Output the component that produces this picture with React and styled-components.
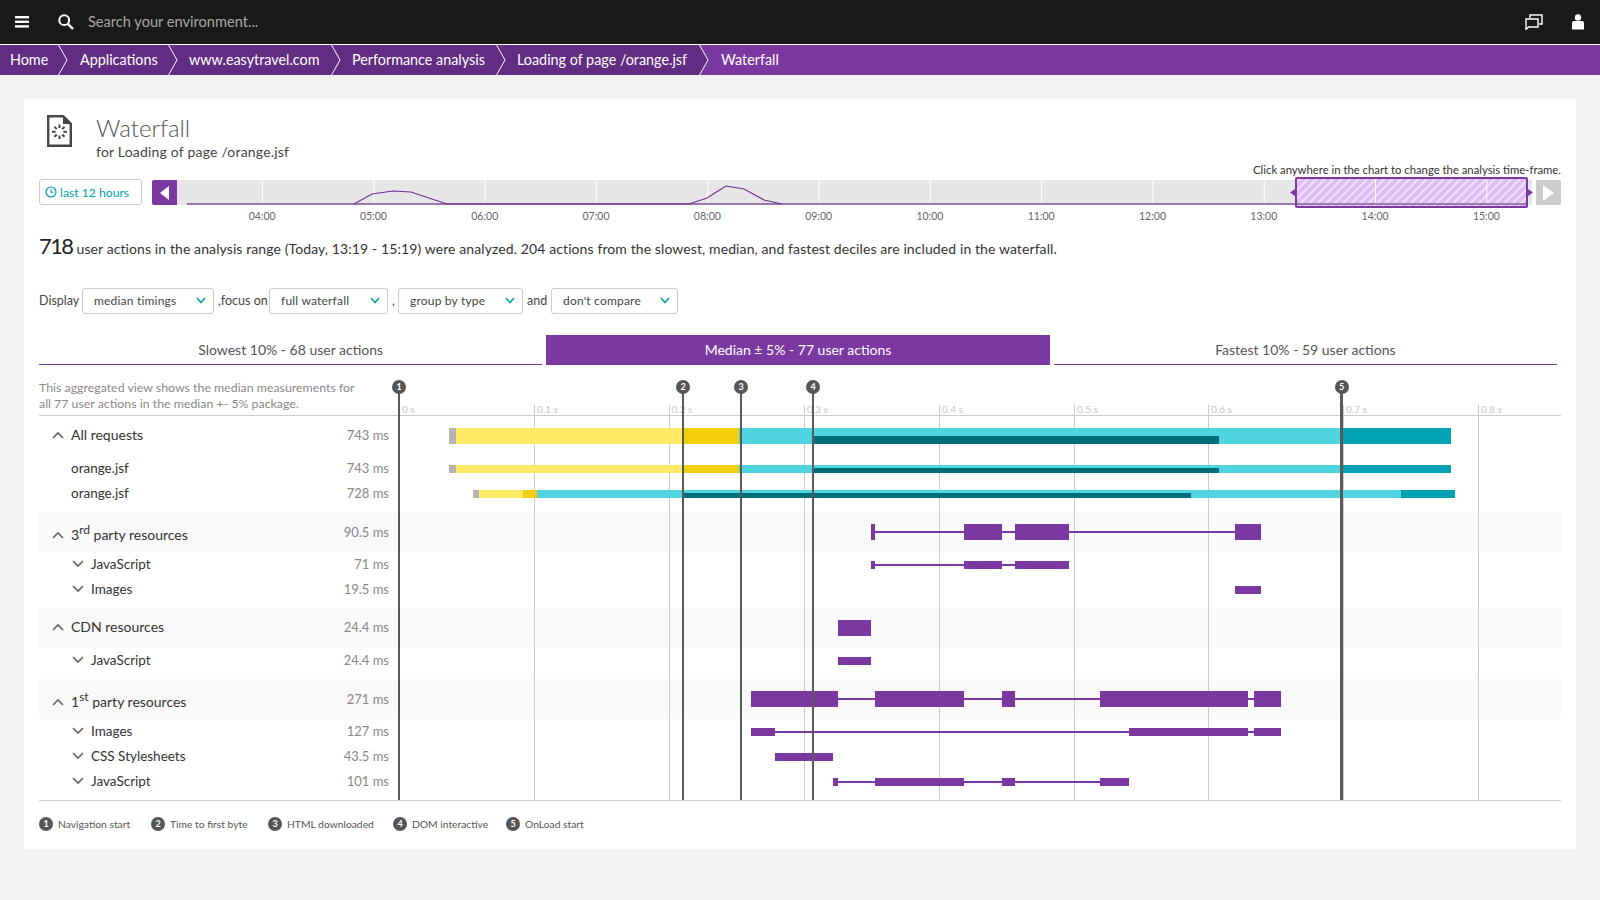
import React from 'react';
import styled, { createGlobalStyle } from 'styled-components';

const PURPLE = '#7c38a1';
const DARK_PURPLE = '#622c83';
const TEAL = '#00a1b2';
const FONT = '"Lato", "Open Sans", sans-serif';

const GlobalStyle = createGlobalStyle`
  html, body {
    margin: 0;
    padding: 0;
    background: #f2f2f2;
    font-family: ${FONT};
    color: #333;
  }
  * { box-sizing: border-box; }
`;

const Page = styled.div`
  width: 1600px;
  height: 900px;
  overflow: hidden;
  background: #f2f2f2;
`;

/* top bar */
const TopBar = styled.header`
  height: 45px;
  background: #191919;
  border-bottom: 1px solid #fff;
  display: flex;
  align-items: center;
  padding: 0 15px 0 15px;
`;

const SearchText = styled.span`
  color: #a8a8a8;
  font-size: 14.6px;
  margin: 0 0 2px 14px;
`;

const TopRight = styled.div`
  margin-left: auto;
  display: flex;
  align-items: center;
  gap: 28px;
`;

const IconSlot = styled.svg`
  display: block;
  flex: none;
  margin-left: ${p => p.$ml || 0}px;
`;

/* breadcrumbs */
const CrumbBar = styled.nav`
  height: 30px;
  background: ${PURPLE};
  display: flex;
  color: #fff;
  font-size: 14.35px;
`;

const Crumb = styled.div`
  display: flex;
  align-items: center;
  background: ${p => (p.$last ? 'transparent' : DARK_PURPLE)};
  padding-left: ${p => p.$pl}px;
`;

const CrumbText = styled.span`
  width: ${p => p.$w}px;
  white-space: nowrap;
  margin: 0 11px 2px 0;
`;

const CrumbChevron = ({ last }) => (
  <IconSlot width="11" height="30" viewBox="0 0 11 30" style={{ background: last ? PURPLE : DARK_PURPLE }}>
    <polygon points="0,0 9,15 0,30" fill={DARK_PURPLE} />
    <polyline points="0.5,0 9,15 0.5,30" fill="none" stroke="#fff" strokeWidth="1" />
  </IconSlot>
);

/* card */
const Card = styled.main`
  margin: 24px 24px 0;
  height: 750px;
  background: #fff;
  border-radius: 2px;
  padding: 0 15px;
`;

const TitleRow = styled.div`
  display: flex;
  height: 64px;
  padding: 16px 0 0 8px;
`;

const TitleText = styled.div`
  margin-left: 24px;
`;

const Title = styled.h1`
  margin: 0;
  font-size: 24px;
  font-weight: 300;
  line-height: 26px;
  color: #555;
`;

const Subtitle = styled.div`
  font-size: 14px;
  letter-spacing: 0.2px;
  line-height: 20px;
  margin-top: 1px;
  color: #454646;
`;

const Hint = styled.div`
  text-align: right;
  font-size: 11.3px;
  line-height: 14px;
  height: 16px;
  color: #333;
`;

const TimeRow = styled.div`
  display: flex;
  align-items: flex-start;
`;

const RangeButton = styled.div`
  width: 103px;
  height: 26px;
  border: 1px solid #ccc;
  border-radius: 3px;
  color: ${TEAL};
  font-size: 12.2px;
  display: flex;
  align-items: center;
  padding-left: 5px;
  gap: 3px;
  margin-right: 10px;
`;

const StepButton = styled.div`
  width: 25px;
  height: 25px;
  margin-top: 1px;
  background: ${p => (p.$active ? PURPLE : '#ccc')};
  border-radius: ${p => (p.$active ? '2px 0 0 2px' : '0 2px 2px 0')};
  margin-left: ${p => (p.$active ? 0 : 4)}px;
  display: flex;
  align-items: center;
  justify-content: center;
  color: #fff;
`;

const TimeChart = styled.div`
  width: 1355px;
  margin-top: 1px;
`;

const TimeSvg = styled.svg`
  display: block;
  overflow: visible;
  background: #e6e6e6;
`;

const TimeAxis = styled.div`
  display: flex;
  padding-left: 29.5px;
  margin-top: 4px;
`;

const TimeLabel = styled.span`
  flex: none;
  width: 111.3px;
  text-align: center;
  font-size: 10.5px;
  line-height: 14px;
  color: #666;
`;

const Summary = styled.div`
  margin-top: 7px;
  height: 31px;
  line-height: 31px;
  font-size: 14px;
  letter-spacing: 0.1px;
  color: #333;
  white-space: nowrap;
`;

const SummaryCount = styled.span`
  font-size: 22px;
  letter-spacing: -1.6px;
  margin-right: 4px;
  color: #222;
`;

const Filters = styled.div`
  margin-top: 27px;
  display: flex;
  align-items: center;
  gap: 4px;
  font-size: 12.5px;
  color: #454646;
`;

const FilterLabel = styled.span`
  width: ${p => p.$w}px;
  white-space: nowrap;
  padding-bottom: 1px;
`;

const Select = styled.div`
  width: ${p => p.$w}px;
  height: 26px;
  border: 1px solid #ccc;
  border-radius: 3px;
  padding: 0 7px 1px 11px;
  display: flex;
  align-items: center;
  justify-content: space-between;
  font-size: 12px;
  letter-spacing: 0.2px;
`;

const Tabs = styled.div`
  margin-top: 21px;
  padding-right: 4px;
  display: grid;
  grid-template-columns: repeat(3, 1fr);
  gap: 4px;
`;

const Tab = styled.div`
  height: 30px;
  line-height: 29px;
  text-align: center;
  font-size: 14px;
  color: ${p => (p.$active ? '#fff' : '#555')};
  background: ${p => (p.$active ? PURPLE : 'transparent')};
  border-bottom: 1px solid ${PURPLE};
`;

/* waterfall */
const Chart = styled.section`
  position: relative;
  isolation: isolate;
  border-bottom: 1px solid #ccc;
`;

const ChartHead = styled.div`
  height: 51px;
  padding-top: 15px;
  border-bottom: 1px solid #ccc;
`;

const InfoText = styled.p`
  margin: 0;
  width: 325px;
  font-size: 12.35px;
  line-height: 16px;
  color: #888;
`;

const GridLayer = styled.div`
  position: absolute;
  top: 40px;
  bottom: 0;
  left: 0;
  right: 0;
  z-index: 0;
  pointer-events: none;
`;

const GridLine = styled.div`
  position: absolute;
  top: 0;
  bottom: 0;
  width: 1px;
  background: #ccc;
`;

const GridTick = styled.span`
  position: absolute;
  left: 3px;
  top: -1px;
  font-size: 10px;
  line-height: 11px;
  color: #c8c8c8;
  white-space: nowrap;
`;

const MarkerLayer = styled.div`
  position: absolute;
  top: 15px;
  bottom: 0;
  left: 0;
  right: 0;
  z-index: 2;
  pointer-events: none;
`;

const MarkerLine = styled.div`
  position: absolute;
  top: 7px;
  bottom: 0;
  width: ${p => p.$w || 2}px;
  background: #5a5a5a;
`;

const Dot = styled.span`
  width: 14px;
  height: 14px;
  border-radius: 50%;
  background: #555;
  color: #fff;
  font-size: 9px;
  font-weight: 700;
  line-height: 14px;
  text-align: center;
  flex: none;
  display: block;
`;

const MarkerDot = styled(Dot)`
  position: absolute;
  top: 0;
`;

const Section = styled.div`
  padding-bottom: 5px;
`;

const SubRows = styled.div`
  padding-top: 1px;
`;

const Row = styled.div`
  display: grid;
  grid-template-columns: 360px 1fr;
  height: ${p => (p.$group ? 40 : 25)}px;
  background: ${p => (p.$band ? '#f9f9f9' : 'transparent')};
`;

const LabelCell = styled.div`
  display: flex;
  align-items: center;
  padding-right: 10px;
  padding-left: ${p => p.$pl}px;
  padding-top: ${p => p.$drop || 0}px;
  padding-bottom: ${p => (p.$group ? 3 : 4)}px;
  gap: 7px;
  font-size: ${p => (p.$group ? 14 : 13.5)}px;
  color: #333;
`;

const RowName = styled.span`
  white-space: nowrap;
  sup {
    font-size: 12px;
    line-height: 0;
  }
`;

const Duration = styled.span`
  margin-left: auto;
  font-size: 13px;
  color: #888;
  white-space: nowrap;
  transform: translateY(${p => (p.$drop ? -3.5 : 0)}px);
`;

const Track = styled.svg`
  display: block;
  position: relative;
  z-index: 1;
`;

const Legend = styled.div`
  margin-top: 16px;
  display: flex;
  gap: 20px;
`;

const LegendItem = styled.div`
  display: flex;
  align-items: center;
  gap: 5px;
  width: ${p => p.$w}px;
  font-size: 10.3px;
  color: #555;
  white-space: nowrap;
`;

const Caret = ({ up, size = 12 }) => (
  <IconSlot width={size} height="8" viewBox="0 0 12 8">
    <polyline points={up ? '1,7 6,2 11,7' : '1,1 6,6 11,1'} fill="none" stroke="#666" strokeWidth="1.7" />
  </IconSlot>
);

const SelectChevron = () => (
  <IconSlot width="10" height="7" viewBox="0 0 10 7">
    <polyline points="1,1 5,5.5 9,1" fill="none" stroke={TEAL} strokeWidth="1.5" />
  </IconSlot>
);

const ORIGIN = 399;
const TRACK_W = 1162;
const Y = '#ffe965', YD = '#f2cf0a', C = '#4fd5e0', CD = '#00a1b2', DK = '#006e7a', G = '#b3b3b3';

// all x values are page pixels, taken from the timeline scale
const timed = (a, b, c, d, e, dark) => ({
  fills: [[a, b, G], [b, c, Y], [c, d, YD], [d, e[0], C], [e[0], e[1], CD]],
  dark,
});
const boxes = (...pairs) => ({
  line: [pairs[0][0], pairs[pairs.length - 1][1]],
  fills: pairs.map(p => [p[0], p[1], PURPLE]),
});

const third = [[871, 875], [964, 1002], [1015, 1069], [1235, 1261]];
const firstParty = [[751, 838], [875, 964], [1002, 1015], [1100, 1248], [1254, 1281]];

const SECTIONS = [
  {
    name: 'All requests', ms: '743 ms',
    bar: timed(449, 456, 684, 739, [1342, 1451], [813, 1219]),
    rows: [
      { name: 'orange.jsf', ms: '743 ms', bar: timed(449, 456, 684, 739, [1342, 1451], [813, 1219]) },
      { name: 'orange.jsf', ms: '728 ms', bar: timed(473, 479, 523, 537, [1401, 1455], [683, 1191]) },
    ],
  },
  {
    name: <>3<sup>rd</sup> party resources</>, ms: '90.5 ms', band: true, drop: 8,
    bar: boxes(...third),
    rows: [
      { name: 'JavaScript', ms: '71 ms', caret: true, bar: boxes(third[0], third[1], third[2]) },
      { name: 'Images', ms: '19.5 ms', caret: true, bar: boxes(third[3]) },
    ],
  },
  {
    name: 'CDN resources', ms: '24.4 ms', band: true,
    bar: boxes([838, 871]),
    rows: [{ name: 'JavaScript', ms: '24.4 ms', caret: true, bar: boxes([838, 871]) }],
  },
  {
    name: <>1<sup>st</sup> party resources</>, ms: '271 ms', band: true, drop: 8,
    bar: boxes(...firstParty),
    rows: [
      { name: 'Images', ms: '127 ms', caret: true, bar: boxes([751, 775], [1129, 1248], [1254, 1281]) },
      { name: 'CSS Stylesheets', ms: '43.5 ms', caret: true, bar: boxes([775, 833]) },
      { name: 'JavaScript', ms: '101 ms', caret: true, bar: boxes([833, 838], [875, 964], [1002, 1015], [1100, 1129]) },
    ],
  },
];

const TICKS = [
  ['0 s', 399], ['0.1 s', 534], ['0.2 s', 668.5], ['0.3 s', 804], ['0.4 s', 939],
  ['0.5 s', 1074], ['0.6 s', 1208], ['0.7 s', 1343], ['0.8 s', 1478],
];

const MARKERS = [
  [1, 399, 2], [2, 683, 2], [3, 741, 2], [4, 813, 2], [5, 1341.5, 2.5],
];

const LEGEND = [
  ['Navigation start', 92],
  ['Time to first byte', 97],
  ['HTML downloaded', 105],
  ['DOM interactive', 93],
  ['OnLoad start', 78],
];

const HOURS = ['04:00', '05:00', '06:00', '07:00', '08:00', '09:00', '10:00', '11:00', '12:00', '13:00', '14:00', '15:00'];

const SPARK = [
  [354, 204], [372, 194], [393, 191], [411, 192], [447, 204], [689, 204],
  [707, 198], [726, 186], [744, 189], [764, 200], [782, 204],
];

const TimelineGraph = () => (
  <TimeSvg width="1355" height="25" viewBox="0 0 1355 25">
    <defs>
      <pattern id="hatch" width="6" height="6" patternUnits="userSpaceOnUse" patternTransform="rotate(45)">
        <rect width="6" height="6" fill="#dcbdf5" />
        <rect width="2" height="6" fill="#efe2fa" />
      </pattern>
    </defs>
    <rect x="1118" y="-3" width="233" height="31" fill="url(#hatch)" />
    {HOURS.map((h, i) => (
      <rect key={h} x={85 + i * 111.3} y="0" width="1" height="25" fill="#fff" />
    ))}
    <rect x="10" y="23" width="1340" height="2" fill="#9a78ae" />
    <polyline
      points={SPARK.map(([x, y]) => `${x - 177},${y - 180}`).join(' ')}
      fill="none"
      stroke="#6d2f92"
      strokeWidth="1.1"
    />
    <rect x="1119" y="-2" width="231" height="29" rx="1.5" fill="none" stroke={PURPLE} strokeWidth="2" />
    <polygon points="1118,9 1113,12.5 1118,16" fill={PURPLE} />
    <polygon points="1351,9 1356,12.5 1351,16" fill={PURPLE} />
  </TimeSvg>
);

const WaterfallBar = ({ bar, group }) => {
  const w = TRACK_W;
  const h = group ? 40 : 25;
  const top = group ? 12 : 8;
  const tall = group ? 16 : 8;
  const darkH = group ? 8 : 5;
  const mid = top + tall / 2 - 1;
  return (
    <Track width={w} height={h} viewBox={`0 0 ${w} ${h}`} shapeRendering="crispEdges">
      {bar.line && (
        <rect x={bar.line[0] - ORIGIN} y={mid} width={bar.line[1] - bar.line[0]} height="2" fill={PURPLE} />
      )}
      {bar.fills.map(([a, b, color]) => (
        <rect key={a} x={a - ORIGIN} y={top} width={b - a} height={tall} fill={color} />
      ))}
      {bar.dark && (
        <rect
          x={bar.dark[0] - ORIGIN}
          y={top + tall - darkH}
          width={bar.dark[1] - bar.dark[0]}
          height={darkH}
          fill={DK}
        />
      )}
    </Track>
  );
};

const App = () => (
  <Page>
    <GlobalStyle />
    <TopBar>
      <IconSlot width="14" height="12" viewBox="0 0 14 12">
        <rect y="0" width="14" height="2.4" fill="#fff" />
        <rect y="4.6" width="14" height="2.4" fill="#fff" />
        <rect y="9.2" width="14" height="2.4" fill="#fff" />
      </IconSlot>
      <IconSlot $ml={29} width="16" height="16" viewBox="0 0 16 16">
        <circle cx="6.2" cy="6.2" r="4.9" fill="none" stroke="#fff" strokeWidth="2" />
        <line x1="9.8" y1="9.8" x2="15" y2="15" stroke="#fff" strokeWidth="2.4" />
      </IconSlot>
      <SearchText>Search your environment...</SearchText>
      <TopRight>
        <IconSlot width="18" height="16" viewBox="0 0 18 16">
          <path d="M5 4V1h12v9h-3" fill="none" stroke="#fff" strokeWidth="1.4" />
          <path d="M1 5h12v8H3.5L1 15.5z" fill="none" stroke="#fff" strokeWidth="1.4" />
        </IconSlot>
        <IconSlot width="14" height="16" viewBox="0 0 14 16">
          <circle cx="7" cy="3.4" r="3.2" fill="#fff" />
          <path d="M1 8.5q0-1.5 2-1.5h8q2 0 2 1.5V15.5H1z" fill="#fff" />
        </IconSlot>
      </TopRight>
    </TopBar>

    <CrumbBar>
      <Crumb $pl={10}><CrumbText $w={37}>Home</CrumbText><CrumbChevron /></Crumb>
      <Crumb $pl={11}><CrumbText $w={77}>Applications</CrumbText><CrumbChevron /></Crumb>
      <Crumb $pl={10}><CrumbText $w={131}>www.easytravel.com</CrumbText><CrumbChevron /></Crumb>
      <Crumb $pl={10}><CrumbText $w={133}>Performance analysis</CrumbText><CrumbChevron /></Crumb>
      <Crumb $pl={10}><CrumbText $w={171}>Loading of page /orange.jsf</CrumbText><CrumbChevron last /></Crumb>
      <Crumb $pl={11} $last><CrumbText $w={58}>Waterfall</CrumbText></Crumb>
    </CrumbBar>

    <Card>
      <TitleRow>
        <IconSlot width="25" height="32" viewBox="0 0 25 32">
          <path d="M1.2 1.2h15l7.6 7.6v22H1.2z" fill="#fff" stroke="#454646" strokeWidth="2.4" />
          <path d="M16 1v8h8z" fill="#454646" />
          <g stroke="#454646" strokeWidth="2">
            <line x1="12.5" y1="9.5" x2="12.5" y2="13" />
            <line x1="12.5" y1="20.5" x2="12.5" y2="24" />
            <line x1="5" y1="16.8" x2="8.6" y2="16.8" />
            <line x1="16.4" y1="16.8" x2="20" y2="16.8" />
            <line x1="7.5" y1="11.8" x2="9.8" y2="14.1" />
            <line x1="15.2" y1="19.5" x2="17.5" y2="21.8" />
            <line x1="17.5" y1="11.8" x2="15.2" y2="14.1" />
            <line x1="9.8" y1="19.5" x2="7.5" y2="21.8" />
          </g>
        </IconSlot>
        <TitleText>
          <Title>Waterfall</Title>
          <Subtitle>for Loading of page /orange.jsf</Subtitle>
        </TitleText>
      </TitleRow>

      <Hint>Click anywhere in the chart to change the analysis time-frame.</Hint>

      <TimeRow>
        <RangeButton>
          <IconSlot width="12" height="12" viewBox="0 0 12 12">
            <circle cx="6" cy="6" r="5" fill="none" stroke={TEAL} strokeWidth="1.2" />
            <path d="M6 3v3.3h2.5" fill="none" stroke={TEAL} strokeWidth="1.1" />
          </IconSlot>
          last 12 hours
        </RangeButton>
        <StepButton $active>
          <svg width="9" height="14" viewBox="0 0 9 14"><polygon points="9,0 0,7 9,14" fill="#fff" /></svg>
        </StepButton>
        <TimeChart>
          <TimelineGraph />
          <TimeAxis>
            {HOURS.map(h => <TimeLabel key={h}>{h}</TimeLabel>)}
          </TimeAxis>
        </TimeChart>
        <StepButton>
          <svg width="11" height="16" viewBox="0 0 11 16"><polygon points="0,0 11,8 0,16" fill="#fff" /></svg>
        </StepButton>
      </TimeRow>

      <Summary>
        <SummaryCount>718</SummaryCount>
        user actions in the analysis range (Today, 13:19 - 15:19) were analyzed. 204 actions from the slowest, median, and fastest deciles are included in the waterfall.
      </Summary>

      <Filters>
        <FilterLabel $w={39}>Display</FilterLabel>
        <Select $w={132}>median timings<SelectChevron /></Select>
        <FilterLabel $w={47}>,focus on</FilterLabel>
        <Select $w={119}>full waterfall<SelectChevron /></Select>
        <FilterLabel $w={2}>,</FilterLabel>
        <Select $w={125}>group by type<SelectChevron /></Select>
        <FilterLabel $w={20}>and</FilterLabel>
        <Select $w={127}>don't compare<SelectChevron /></Select>
      </Filters>

      <Tabs>
        <Tab>Slowest 10% - 68 user actions</Tab>
        <Tab $active>Median ± 5% - 77 user actions</Tab>
        <Tab>Fastest 10% - 59 user actions</Tab>
      </Tabs>

      <Chart>
        <ChartHead>
          <InfoText>
            This aggregated view shows the median measurements for all 77 user actions in the median +- 5% package.
          </InfoText>
        </ChartHead>

        <GridLayer>
          {TICKS.map(([label, x]) => (
            <GridLine key={label} style={{ left: x - 39 }}>
              <GridTick>{label}</GridTick>
            </GridLine>
          ))}
        </GridLayer>

        {SECTIONS.map((s, i) => (
          <Section key={i}>
            <Row $group $band={s.band}>
              <LabelCell $group $pl={13} $drop={s.drop}>
                <Caret up />
                <RowName>{s.name}</RowName>
                <Duration $drop={s.drop}>{s.ms}</Duration>
              </LabelCell>
              <WaterfallBar bar={s.bar} group />
            </Row>
            <SubRows>
              {s.rows.map((r, j) => (
                <Row key={j}>
                  <LabelCell $pl={r.caret ? 33 : 32}>
                    {r.caret && <Caret />}
                    <RowName>{r.name}</RowName>
                    <Duration>{r.ms}</Duration>
                  </LabelCell>
                  <WaterfallBar bar={r.bar} />
                </Row>
              ))}
            </SubRows>
          </Section>
        ))}

        <MarkerLayer>
          {MARKERS.map(([n, x, w]) => (
            <React.Fragment key={n}>
              <MarkerLine $w={w} style={{ left: x - 39 - w / 2 }} />
              <MarkerDot style={{ left: x - 39 - 7 }}>{n}</MarkerDot>
            </React.Fragment>
          ))}
        </MarkerLayer>
      </Chart>

      <Legend>
        {LEGEND.map(([text, w], i) => (
          <LegendItem key={text} $w={w}>
            <Dot>{i + 1}</Dot>
            {text}
          </LegendItem>
        ))}
      </Legend>
    </Card>
  </Page>
);

export default App;
